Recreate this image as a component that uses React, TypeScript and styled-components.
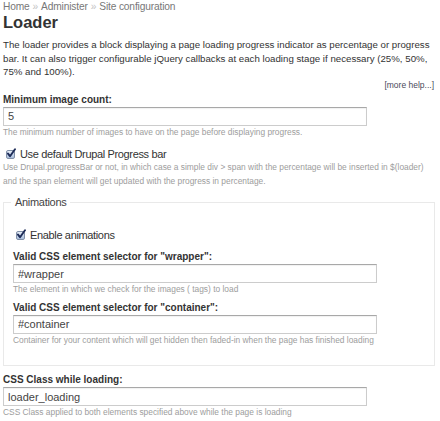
import styled, { createGlobalStyle } from "styled-components";

const GlobalStyle = createGlobalStyle`
  html, body {
    margin: 0;
    padding: 0;
    background: #fff;
  }
  body {
    font-family: "Liberation Sans", Arial, sans-serif;
    color: #333;
  }
`;

const Page = styled.div`
  width: 440px;
  padding: 0 5px 0 3px;
  box-sizing: border-box;
`;

const Breadcrumb = styled.div`
  font-size: 10.2px;
  letter-spacing: -0.15px;
  line-height: 14px;
  color: #777;
`;

const Sep = styled.span`
  color: #c4c4c4;
  margin: 0 3px;
`;

const Title = styled.h1`
  margin: 0;
  font-size: 16.5px;
  line-height: 17px;
  font-weight: bold;
  color: #333;
`;

const Intro = styled.p`
  margin: 7px 0 0;
  font-size: 9.7px;
  line-height: 13.5px;
  color: #333;
`;

const MoreHelp = styled.div`
  text-align: right;
  font-size: 8.5px;
  line-height: 12px;
  color: #4a4a5a;
  padding-right: 1px;
`;

const Item = styled.div<{ $gap?: number }>`
  margin-top: ${(p) => p.$gap ?? 0}px;
`;

const Label = styled.label`
  display: block;
  font-size: 10px;
  line-height: 14px;
  font-weight: bold;
  color: #333;
`;

const TextInput = styled.input`
  display: block;
  width: 364px;
  height: 19px;
  box-sizing: border-box;
  margin: 0;
  padding: 0 4px;
  border: 1px solid #ccc;
  border-top-color: #a8a8a8;
  box-shadow: inset 0 1px 1px rgba(0, 0, 0, 0.06);
  font-family: "Liberation Sans", Arial, sans-serif;
  font-size: 11px;
  color: #444;
  background: #fff;
  outline: none;
`;

const Description = styled.div`
  font-size: 8.4px;
  line-height: 13.5px;
  color: #9d9d9d;
`;

const CheckRow = styled.label`
  display: flex;
  align-items: center;
  gap: 5px;
  padding-left: 3px;
  font-size: 11px;
  letter-spacing: -0.35px;
  line-height: 14px;
  color: #333;
`;

const Box = styled.span`
  position: relative;
  width: 7px;
  height: 7px;
  border: 1px solid #8190a8;
  border-radius: 2px;
  background: linear-gradient(#e6edf7, #a9bedc);
  flex: none;
`;

const Check = styled.svg`
  position: absolute;
  left: -1px;
  top: -3px;
  width: 10px;
  height: 10px;
`;

const Fieldset = styled.fieldset`
  margin: 7px 0 0;
  padding: 19px 9px 18px 9px;
  border: 1px solid #e9e9e9;
  min-width: 0;
`;

const Legend = styled.legend`
  margin-left: -2px;
  padding: 0 4px;
  font-size: 11px;
  letter-spacing: -0.3px;
  line-height: 14px;
  color: #444;
`;

const Checkbox = ({ children }: { children: React.ReactNode }) => (
  <CheckRow>
    <Box>
      <Check viewBox="0 0 10 10">
        <path
          d="M2 5.6 L4 8.2 L9 1.2"
          fill="none"
          stroke="#1c2b57"
          strokeWidth="1.9"
          strokeLinecap="round"
          strokeLinejoin="round"
        />
      </Check>
    </Box>
    {children}
  </CheckRow>
);

type FieldProps = {
  label: string;
  value: string;
  description: string;
  gap?: number;
};

const Field = ({ label, value, description, gap }: FieldProps) => (
  <Item $gap={gap}>
    <Label>{label}</Label>
    <TextInput defaultValue={value} />
    <Description>{description}</Description>
  </Item>
);

const App = () => {
  return (
    <Page>
      <GlobalStyle />
      <Breadcrumb>
        Home<Sep>»</Sep>Administer<Sep>»</Sep>Site configuration
      </Breadcrumb>
      <Title>Loader</Title>
      <Intro>
        The loader provides a block displaying a page loading progress
        indicator as percentage or progress bar. It can also trigger
        configurable jQuery callbacks at each loading stage if necessary (25%,
        50%, 75% and 100%).
      </Intro>
      <MoreHelp>[more help...]</MoreHelp>

      <Field
        gap={2}
        label="Minimum image count:"
        value="5"
        description="The minimum number of images to have on the page before displaying progress."
      />

      <Item $gap={8}>
        <Checkbox>Use default Drupal Progress bar</Checkbox>
        <Description>
          Use Drupal.progressBar or not, in which case a simple div &gt; span
          with the percentage will be inserted in $(loader) and the span
          element will get updated with the progress in percentage.
        </Description>
      </Item>

      <Fieldset>
        <Legend>Animations</Legend>
        <Checkbox>Enable animations</Checkbox>
        <Field
          gap={8}
          label={'Valid CSS element selector for "wrapper":'}
          value="#wrapper"
          description="The element in which we check for the images ( tags) to load"
        />
        <Field
          gap={4}
          label={'Valid CSS element selector for "container":'}
          value="#container"
          description="Container for your content which will get hidden then faded-in when the page has finished loading"
        />
      </Fieldset>

      <Field
        gap={7}
        label="CSS Class while loading:"
        value="loader_loading"
        description="CSS Class applied to both elements specified above while the page is loading"
      />
    </Page>
  );
};

export default App;
